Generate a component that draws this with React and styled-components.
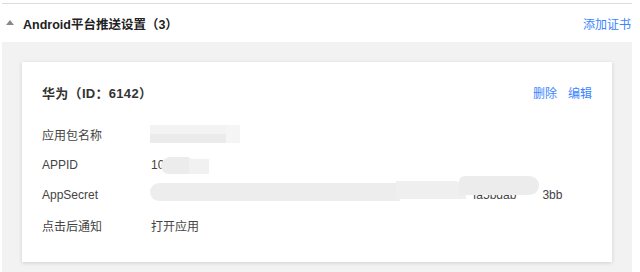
import styled, { createGlobalStyle } from 'styled-components';

const GlobalStyle = createGlobalStyle`
  html, body {
    margin: 0;
    padding: 0;
    background: #fff;
  }
  body {
    font-family: "Liberation Sans", Arial, "Noto Sans CJK SC", sans-serif;
    color: #333;
  }
`;

const Page = styled.div`
  width: 630px;
  margin-left: 2px;
  padding-top: 3px;
`;

const Section = styled.section`
  border-top: 1px solid #dcdcdc;
`;

const Header = styled.div`
  height: 38px;
  display: flex;
  align-items: center;
  justify-content: space-between;
  padding: 0 1px 0 4px;
`;

const HeaderTitle = styled.div`
  display: flex;
  align-items: center;
  gap: 9px;
  font-size: 12.5px;
  font-weight: bold;
  color: #222;
`;

const Caret = styled.span`
  width: 0;
  height: 0;
  border-left: 4px solid transparent;
  border-right: 4px solid transparent;
  border-bottom: 5px solid #888;
  margin-top: -1px;
`;

const Link = styled.a`
  font-size: 12px;
  color: #3a84ff;
  cursor: pointer;
  text-decoration: none;
`;

const Panel = styled.div`
  background: #f2f2f2;
  padding: 20px 20px 10px;
`;

const Card = styled.div`
  background: #fff;
  box-shadow: 0 1px 4px rgba(0, 0, 0, 0.14);
  padding: 20px 20px 21px;
`;

const CardHead = styled.div`
  height: 20px;
  display: flex;
  align-items: center;
  justify-content: space-between;
  margin-bottom: 17px;
`;

const CardTitle = styled.div`
  font-size: 13px;
  font-weight: bold;
  color: #333;
  letter-spacing: 0.3px;
`;

const Actions = styled.div`
  display: flex;
  gap: 11px;
`;

const Row = styled.div`
  height: 30.5px;
  display: flex;
  align-items: center;
  font-size: 12px;
`;

const Label = styled.div`
  width: 109px;
  color: #444;
`;

const Value = styled.div`
  position: relative;
  display: flex;
  align-items: center;
  color: #444;
  flex: 1;
  height: 100%;
`;

const Mask = styled.span`
  position: absolute;
  background: ${({ $tone }) => $tone || '#ececec'};
  border-radius: ${({ $round }) => $round || '0'};
  filter: blur(0.6px);
`;

export default function App() {
  return (
    <Page>
      <GlobalStyle />
      <Section>
        <Header>
          <HeaderTitle>
            <Caret />
            <span>Android平台推送设置（3）</span>
          </HeaderTitle>
          <Link>添加证书</Link>
        </Header>
        <Panel>
          <Card>
            <CardHead>
              <CardTitle>华为（ID：6142）</CardTitle>
              <Actions>
                <Link>删除</Link>
                <Link>编辑</Link>
              </Actions>
            </CardHead>
            <Row>
              <Label>应用包名称</Label>
              <Value>
                <Mask style={{ left: -1, top: 6, width: 90, height: 9 }} $tone="#f3f3f3" />
                <Mask style={{ left: -1, top: 15, width: 76, height: 9 }} $tone="#ebebeb" />
                <Mask style={{ left: 75, top: 6, width: 14, height: 18 }} $tone="#f5f5f5" />
              </Value>
            </Row>
            <Row>
              <Label>APPID</Label>
              <Value>
                <span>10</span>
                <Mask style={{ left: 10, top: 7, width: 30, height: 17 }} $tone="#ececec" $round="9px 4px 0 8px" />
                <Mask style={{ left: 38, top: 9, width: 20, height: 15 }} $tone="#f1f1f1" />
              </Value>
            </Row>
            <Row>
              <Label>AppSecret</Label>
              <Value>
                <span style={{ marginLeft: 322 }}>fa5bdab</span>
                <span style={{ marginLeft: 26 }}>3bb</span>
                <Mask style={{ left: -1, top: 3, width: 250, height: 18 }} $tone="#ededed" $round="9px 0 0 9px" />
                <Mask style={{ left: 245, top: 1, width: 70, height: 18 }} $tone="#efefef" $round="0 12px 0 0" />
                <Mask style={{ left: 308, top: -4, width: 80, height: 19 }} $tone="#ececec" $round="6px 10px 10px 0" />
              </Value>
            </Row>
            <Row>
              <Label>点击后通知</Label>
              <Value>打开应用</Value>
            </Row>
          </Card>
        </Panel>
      </Section>
    </Page>
  );
}
